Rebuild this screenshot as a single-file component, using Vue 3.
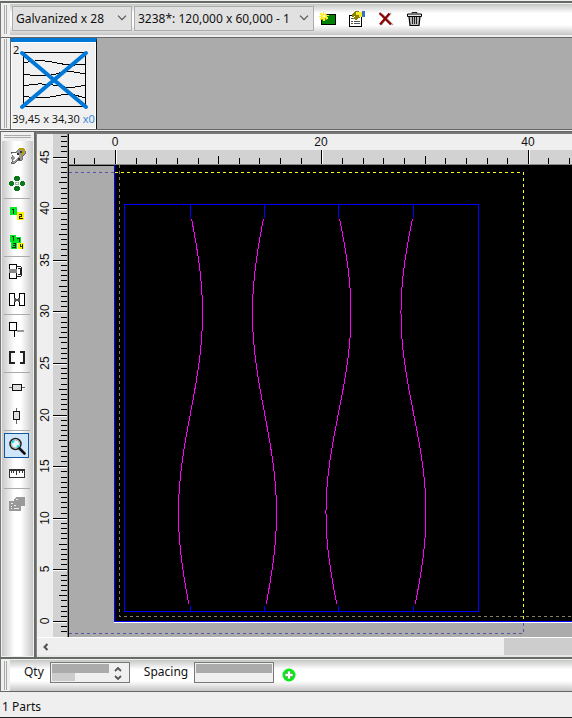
<script setup>
import { ref, computed, onMounted, onBeforeUnmount } from 'vue'

const material = ref('Galvanized x 28')
const sheet = ref('3238*: 120,000 x 60,000 - 1')
const qty = ref('')
const spacing = ref('')

// Pixels per drawing unit on screen
const UNIT = 10.32

const planEl = ref(null)
const planWidth = ref(500)
const measure = () => {
  if (planEl.value) planWidth.value = planEl.value.clientWidth
}
onMounted(() => {
  measure()
  window.addEventListener('resize', measure)
})
onBeforeUnmount(() => window.removeEventListener('resize', measure))

// Horizontal ruler: one tick per 2 units, labelled every 20
const hTicks = computed(() => {
  const list = []
  for (let n = -2; 46 + n * 2 * UNIT < planWidth.value; n++) {
    list.push({
      x: 46 + Math.round(n * 2 * UNIT),
      top: n % 10 === 0 ? 16 : n % 5 === 0 ? 22 : 24,
      major: n % 10 === 0,
      label: n * 2,
    })
  }
  return list
})

// Vertical ruler: one tick per half unit, labelled every 5
const vTicks = Array.from({ length: 97 }, (_, n) => n - 2).map((n) => ({
  y: 487 - Math.round((n * UNIT) / 2),
  left: n % 10 === 0 ? 16 : n % 5 === 0 ? 22 : 24,
  major: n % 10 === 0,
  label: n / 2,
}))

// Wavy cuts across the part
function wave(cx, amp) {
  const pts = []
  for (let y = 54; y <= 441; y += 5) {
    pts.push(`${(cx + amp * Math.sin(((y - 48) * Math.PI) / 200)).toFixed(2)},${y}`)
  }
  return pts.join(' ')
}
const cuts = [
  { x: 121, points: wave(121.5, 12) },
  { x: 195, points: wave(195.5, -12) },
  { x: 269, points: wave(269.5, 12.5) },
  { x: 344, points: wave(344.5, -12.5) },
]

const groups = [
  ['pick', 'move'],
  ['sort', 'sortall'],
  ['stack', 'gap'],
  ['corner', 'bracket'],
  ['centerh', 'centerv'],
  ['zoom', 'measure'],
  ['props'],
]
const names = {
  pick: 'Pick part', move: 'Move', sort: 'Order', sortall: 'Order all', stack: 'Stack', gap: 'Gap',
  corner: 'Corner', bracket: 'Bounds', centerh: 'Center horizontally', centerv: 'Center vertically',
  zoom: 'Zoom', measure: 'Measure', props: 'Properties',
}
</script>

<template>
  <div class="app">
    <header class="bar top">
      <span class="grip"></span>
      <div class="fill">
        <label class="pick material">
          <select v-model="material" aria-label="Material"><option>Galvanized x 28</option></select>
          <svg width="10" height="6" viewBox="0 0 10 6"><path d="M1 .7 5 4.7 9 .7" fill="none" stroke="#555" stroke-width="1.2" /></svg>
        </label>
        <label class="pick sheet">
          <select v-model="sheet" aria-label="Sheet"><option>3238*: 120,000 x 60,000 - 1</option></select>
          <svg width="10" height="6" viewBox="0 0 10 6"><path d="M1 .7 5 4.7 9 .7" fill="none" stroke="#555" stroke-width="1.2" /></svg>
        </label>
        <div class="tools">
          <button aria-label="New sheet">
            <svg width="18" height="16" shape-rendering="crispEdges">
              <path d="M2.500 3.500H16.500V13.500H2.500z" fill="#008000" stroke="#000" />
              <path d="M2 3h6v6H2z" fill="#9a9a20" />
              <path d="M4 1h1v2h1V2h1v2h3v1H8v1h1v2H7V7H6v3H4V8H2v1H1V7h1V6H0V5h2V4H1V2h2v1h1z" fill="#ffef20" />
              <path d="M4 4h2v2H4z" fill="#fff" />
            </svg>
          </button>
          <button aria-label="Sheet properties">
            <svg width="18" height="16" shape-rendering="crispEdges">
              <path d="M1.500 4.500h12v11h-12z" fill="#fff" stroke="#000" />
              <path d="M3 10.500h2M3 12.500h2M6 10.500h6M6 12.500h6M3 7.500h2" stroke="#555" />
              <path d="M4 3l3-3h4v2h3v4l-4 1-2 2-3-1 2-3-3 1z" fill="#8a8000" />
              <path d="M8 1h6l1 2v3h-4V4H8z" fill="#f5ec20" />
              <path d="M14 0h3v6h-3z" fill="#3970c8" />
            </svg>
          </button>
          <button aria-label="Remove">
            <svg width="18" height="16">
              <path d="M5 3l11 11M14 2 4 14" fill="none" stroke="#aaa" stroke-width="1.500" />
              <path d="M2.500 2 14 13.500M12.500 2.500 3 13.500" fill="none" stroke="#8c0000" stroke-width="2.200" />
            </svg>
          </button>
          <button aria-label="Clear">
            <svg width="18" height="16">
              <path d="M3 5.500h11l-1 9H4z" fill="#bbb" stroke="#000" stroke-width="1.200" />
              <path d="M1.500 3h14v2.500h-14z" fill="#e8e8e8" stroke="#000" />
              <path d="M6 2.500v-1h5v1M6.500 6v7M8.500 6v7M10.500 6v7" fill="none" stroke="#222" />
            </svg>
          </button>
        </div>
      </div>
    </header>

    <section class="strip">
      <span class="grip"></span>
      <div class="parts">
        <button class="part">
          <span class="num">2</span>
          <svg class="thumb" width="70" height="60" shape-rendering="crispEdges">
            <rect x="4.500" y="2.500" width="62" height="54" fill="none" stroke="#000" />
            <path d="M5 13C18 9 28 11 38 13S54 16 66 14M5 24C18 27 32 26 40 23S56 22 66 24M5 36C18 32 30 34 40 36S56 38 66 35M5 46C18 50 32 47 42 45S56 45 66 48" fill="none" stroke="#000" />
            <path d="M3 3 67 57M67 3 3 57" shape-rendering="auto" stroke="#0078d7" stroke-width="4" stroke-linecap="round" />
          </svg>
          <span class="dims">39,45 x 34,30 <em>x0</em></span>
        </button>
      </div>
    </section>

    <main class="work">
      <nav class="side">
        <span class="sgrip"></span>
        <div class="sfill">
          <div v-for="(g, i) in groups" :key="i" class="group">
            <button v-for="t in g" :key="t" :class="{ active: t === 'zoom' }" :aria-label="names[t]">
              <svg width="18" height="18" shape-rendering="crispEdges">
                <template v-if="t === 'pick'">
                  <path d="M3 5h5l3-3h4l2 2v3l-3 3v3l-2 1-2-1-3 3-2 1-2-1 2-3-2-2 2-2z" fill="#999" stroke="#444" stroke-width=".7" />
                  <path d="M4 6h4l3 3-5 5H5l2-3-2-2z" fill="#fff" />
                  <path d="M11 1.500h4l1 2-1 3-2 2" fill="none" stroke="#b8a000" stroke-width="2" />
                  <path d="M12 4h2v2h-2zM9 6h2v2H9zM10 11h2v2h-2z" fill="#333" />
                </template>
                <template v-else-if="t === 'move'">
                  <path d="M7 1h4v1h1v3h-1v1H7V5H6V2h1zM7 11h4v1h1v3h-1v1H7v-1H6v-3h1zM2 6h3v1h1v3H5v1H2v-1H1V7h1zM13 6h3v1h1v3h-1v1h-3v-1h-1V7h1z" fill="#087818" />
                  <path d="M7.500 7.500h3v2h-3z" fill="none" stroke="#9b9" />
                </template>
                <template v-else-if="t === 'sort'">
                  <path d="M2 2h7v8H2z" fill="#00ee20" /><path d="M9 7h7v8H9z" fill="#fff000" />
                  <path d="M4 4.500h1.500V9M11 9.500h2.500v2h-2V13.500h3" fill="none" stroke="#222" />
                </template>
                <template v-else-if="t === 'sortall'">
                  <path d="M2 2h6v7H2zM8 4h5v6H8zM3 9h6v7H3z" fill="#00e820" /><path d="M10 10h6v6h-6z" fill="#fff000" />
                  <path d="M4 3.500h1.500V8M9 5.500h2.500V9M5 10.500h2.500v2H5M7.500 12v2.500H4M12.500 11v2h2.500M14.500 11v5" fill="none" stroke="#123c18" />
                </template>
                <template v-else-if="t === 'stack'">
                  <path d="M1.500 1.500h7v6h-7zM1.500 9.500h7v6h-7z" fill="#fff" stroke="#000" />
                  <path d="M1 6h8v4H1z" fill="#888" />
                  <path d="M8 3.500h5M8 13.500h5M13.500 4v9M9.500 5.500h3v6h-3" fill="none" stroke="#222" />
                </template>
                <template v-else-if="t === 'gap'">
                  <path d="M1.500 2.500h5v12h-5zM11.500 2.500h5v12h-5z" fill="#fff" stroke="#000" />
                  <path d="M6 7h2v1h2V7h2v4h-2v-1H8v1H6z" fill="#555" />
                </template>
                <template v-else-if="t === 'corner'">
                  <path d="M9 10h7" stroke="#999" stroke-width="2" />
                  <path d="M1.500 1.500h7v8h-7zM6.500 10v6" fill="#fff" stroke="#000" />
                </template>
                <template v-else-if="t === 'bracket'">
                  <path d="M7 3H2v2M2 3v11h5M12 3h4v11h-4" fill="none" stroke="#222" stroke-width="1.500" />
                </template>
                <template v-else-if="t === 'centerh'">
                  <path d="M1 8.500h16" stroke="#666" /><path d="M4.500 5.500h9v6h-9z" fill="#ddd" stroke="#111" />
                </template>
                <template v-else-if="t === 'centerv'">
                  <path d="M8.500 1v16" stroke="#666" /><path d="M5.500 4.500h6v8h-6z" fill="#ddd" stroke="#111" />
                </template>
                <template v-else-if="t === 'zoom'">
                  <g shape-rendering="auto">
                    <circle cx="7.500" cy="7" r="5.500" fill="#e4fbfd" stroke="#222" stroke-width="1.500" />
                    <circle cx="7.500" cy="7" r="4" fill="none" stroke="#aaa" />
                    <path d="M4 5.500 6 4M9 10l2-1.500" stroke="#00dfe8" stroke-width="2" />
                    <path d="m11.500 11.500 5 5" stroke="#111" stroke-width="2.600" stroke-linecap="round" />
                  </g>
                </template>
                <template v-else-if="t === 'measure'">
                  <path d="M1.500 4.500h15v8h-15z" fill="#fff" stroke="#333" />
                  <path d="M1 4h16v2H1zM3 6h1v2H3zM5 6h1v2H5zM8 6h1v4H8zM11 6h1v2h-1zM14 6h1v2h-1z" fill="#333" />
                </template>
                <template v-else>
                  <path d="M1 6h5V4l2-2h9v9h-4v5H1z" fill="#999" />
                  <path d="M3 8.500h2M3 11.500h1M3 13.500h1M6 10.500h2M6 13.500h5M8 4.500h2" stroke="#eee" />
                </template>
              </svg>
            </button>
          </div>
        </div>
      </nav>

      <div class="view">
        <div class="stage">
          <svg class="vruler" shape-rendering="crispEdges">
            <rect x="16" width="14" height="100%" fill="#d2d2d2" />
            <template v-for="t in vTicks" :key="t.label">
              <rect :x="t.left" :y="t.y" :width="30 - t.left" height="1" fill="#000" />
              <rect v-if="t.major" x="16" :y="t.y + 1" width="14" height="1" fill="#fff" />
              <text v-if="t.major" :transform="`translate(12 ${t.y}) rotate(-90)`" text-anchor="middle">{{ t.label }}</text>
            </template>
            <rect x="30" width="1" height="100%" fill="#888" />
            <rect x="31" width="1" height="100%" fill="#000" />
          </svg>
          <div ref="planEl" class="plan">
            <svg class="hruler" shape-rendering="crispEdges">
              <rect y="16" width="100%" height="14" fill="#d2d2d2" />
              <template v-for="t in hTicks" :key="t.label">
                <rect :x="t.x" :y="t.top" width="1" :height="30 - t.top" fill="#000" />
                <rect v-if="t.major" :x="t.x + 1" y="16" width="1" height="14" fill="#fff" />
                <text v-if="t.major" :x="t.x" y="12" text-anchor="middle">{{ t.label }}</text>
              </template>
              <rect y="30" width="100%" height="1" fill="#888" />
            </svg>
            <svg class="canvas" shape-rendering="crispEdges">
              <rect x="45" width="100%" height="457" fill="#000" />
              <rect width="46" height="1" fill="#000" />
              <rect x="45" y="457" width="100%" height="1" fill="#fff" />
              <g fill="none" stroke-dasharray="3 3">
                <path d="M0 7.500H45M0 468.500H454.500V458" stroke="#5555aa" />
                <path d="M46 7.500H454.500V456" stroke="#ffff20" />
                <path d="M50.500 0V451.500H4000" stroke="#80805a" />
              </g>
              <rect x="45" width="1" height="457" fill="#0000ff" />
              <rect x="45" y="456" width="100%" height="1" fill="#0000ff" />
              <rect x="55.500" y="39.500" width="354" height="407" fill="none" stroke="#0000ff" />
              <g v-for="c in cuts" :key="c.x">
                <path :d="`M${c.x + 0.5} 40v13M${c.x + 0.5} 441v5`" stroke="#0000ff" />
                <polyline :points="c.points" fill="none" stroke="#ff00ff" />
              </g>
            </svg>
          </div>
        </div>
        <div class="scroll">
          <button aria-label="Scroll left">
            <svg width="8" height="8"><path d="M5.500 1 2.500 4l3 3" fill="none" stroke="#505050" stroke-width="2" /></svg>
          </button>
          <span class="thumbbar"></span>
        </div>
      </div>
    </main>

    <form class="bar bottom" @submit.prevent>
      <span class="grip"></span>
      <div class="fill">
        <label for="qty">Qty</label>
        <div class="spin">
          <input id="qty" v-model="qty" type="text" class="field qty" />
          <div class="arrows">
            <button aria-label="Increase"><svg width="8" height="6"><path d="M1 5 4 2l3 3" fill="none" stroke="#555" stroke-width="1.800" /></svg></button>
            <button aria-label="Decrease"><svg width="8" height="6"><path d="M1 1l3 3 3-3" fill="none" stroke="#555" stroke-width="1.800" /></svg></button>
          </div>
        </div>
        <label for="spacing" class="sp">Spacing</label>
        <div class="spin"><input id="spacing" v-model="spacing" type="text" class="field" /></div>
        <button class="add" aria-label="Add">
          <svg width="14" height="14"><circle cx="7" cy="7" r="6.500" fill="#00ee10" /><path d="M7 3v8M3 7h8" stroke="#999" stroke-width="3.500" /><path d="M7 3.500v7M3.500 7h7" stroke="#fff" stroke-width="2" /></svg>
        </button>
      </div>
    </form>
    <footer class="status">1 Parts</footer>
  </div>
</template>

<style>
body {
  margin: 0;
  background: #efefef;
}
</style>

<style scoped>
.app {
  display: flex;
  flex-direction: column;
  min-height: 100vh;
  box-sizing: border-box;
  border-bottom: 1px solid #222;
  background: #efefef;
  color: #111;
  font: 12px/16px "Noto Sans", "Open Sans", sans-serif;
  overflow: hidden;
}
button {
  display: flex;
  align-items: center;
  justify-content: center;
  padding: 0;
  border: 0;
  background: none;
  font: inherit;
  color: inherit;
}
svg {
  display: block;
}
.bar {
  display: flex;
  border-left: 1px solid #777;
}
.top {
  margin-top: 1px;
  border-top: 2px solid #666b66;
  padding: 1px 0 2px;
}
.grip {
  flex: none;
  width: 1px;
  margin: 1px 3px 1px 3px;
  border: solid #aaa;
  border-width: 0 1px;
}
.fill {
  flex: 1;
  display: flex;
  align-items: center;
  box-sizing: border-box;
  height: 31px;
  background: linear-gradient(#c6c6c6, #fff 30%, #fff 68%, #c6c6c6);
}
.top .fill {
  padding: 0 0 2px 2px;
}
.pick {
  position: relative;
  height: 25px;
  margin-right: 2px;
}
.material {
  width: 120px;
}
.pick.sheet {
  width: 180px;
}
.pick select {
  appearance: none;
  box-sizing: border-box;
  width: 100%;
  height: 100%;
  padding: 0 20px 0 3px;
  border: 1px solid #adadad;
  border-radius: 0;
  background: #e1e1e1;
  color: #111;
  font: inherit;
}
.pick svg {
  position: absolute;
  right: 5px;
  top: 9px;
}
.tools {
  display: flex;
  gap: 11px;
  margin-left: 3px;
}
.strip {
  display: flex;
  border-top: 1px solid #666;
  border-left: 1px solid #777;
  border-bottom: 1px solid #666;
}
.parts {
  flex: 1;
  display: flex;
  height: 91px;
  border-left: 1px solid #666;
  background: #ababab;
}
.part {
  flex-direction: column;
  position: relative;
  justify-content: flex-start;
  box-sizing: border-box;
  width: 86px;
  border-top: 4px solid #0078d7;
  border-right: 1px solid #111;
  background: #f0f0f0;
  box-shadow: inset -1px -1px #fff, inset 1px 1px #fff;
}
.num {
  position: absolute;
  left: 2px;
  top: 0;
  font-size: 11px;
}
.thumb {
  margin-top: 8px;
}
.dims {
  font: 11px/18px "Open Sans", "Noto Sans", sans-serif;
  white-space: nowrap;
}
.dims em {
  font-style: normal;
  color: #2a86d6;
}
.work {
  flex: 1;
  display: flex;
  margin-top: 1px;
  border-top: 1px solid #666;
}
.side {
  flex: none;
  display: flex;
  flex-direction: column;
  box-sizing: border-box;
  width: 36px;
  padding: 2px 1px 1px;
  border-left: 1px solid #777;
  border-right: 2px solid #666b66;
}
.sgrip {
  height: 1px;
  margin: 1px 2px 3px;
  border: solid #aaa;
  border-width: 1px 0;
}
.sfill {
  flex: 1;
  padding-top: 1px;
  background: linear-gradient(90deg, #c8c8c8, #fff 40%, #fff 60%, #c8c8c8);
}
.group + .group {
  border-top: 1px solid #aaa;
  padding-top: 1px;
}
.group {
  margin: 0 3px 0 2px;
}
.group button {
  width: 25px;
  height: 28px;
}
.group .active {
  box-sizing: border-box;
  height: 25px;
  margin: 1px 0 2px;
  border: 1px solid #0f58a0;
  background: #cfe6fa;
}
.view {
  flex: 1;
  min-width: 0;
  display: flex;
  flex-direction: column;
  border-top: 2px solid #777;
  border-left: 1px solid #888;
}
.stage {
  flex: 1;
  display: flex;
  border-bottom: 1px solid #fff;
}
.stage text {
  font: 12px "Liberation Sans", Arial, sans-serif;
  fill: #111;
}
.vruler {
  flex: none;
  width: 32px;
  height: auto;
}
.plan {
  flex: 1;
  min-width: 0;
  display: flex;
  flex-direction: column;
}
.hruler {
  width: 100%;
  height: 31px;
}
.canvas {
  flex: 1;
  width: 100%;
  background: #ababab;
}
.scroll {
  display: flex;
  justify-content: space-between;
  height: 17px;
  border-bottom: 2px solid #e6e6e6;
}
.scroll button {
  width: 17px;
}
.thumbbar {
  width: 68px;
  background: #cdcdcd;
}
.bottom {
  border-top: 2px solid #666b66;
  border-bottom: 1px solid #666;
  padding-top: 1px;
}
.bottom .fill {
  padding: 0 0 2px 14px;
}
.spin {
  display: flex;
  box-sizing: border-box;
  width: 80px;
  height: 21px;
  margin-left: 6px;
  margin-bottom: 5px;
  padding: 1px;
  border: 1px solid #777;
  background: #f0f0f0;
}
.bottom label {
  margin-bottom: 5px;
}
.sp {
  margin-left: 14px;
}
.field {
  flex: 1;
  min-width: 0;
  padding: 0;
  border: 0;
  outline: 0;
  font: inherit;
  background: linear-gradient(#ababab 50%, #f0f0f0 50%);
}
.qty {
  background: linear-gradient(#ababab, #ababab) 0 0 / 100% 9px no-repeat,
    linear-gradient(#ccc, #ccc) 0 9px / 23px 8px no-repeat, #f0f0f0;
}
.arrows {
  display: flex;
  flex-direction: column;
  justify-content: flex-end;
  gap: 3px;
  width: 19px;
}
.add {
  margin-left: 8px;
}
.status {
  height: 25px;
  padding-left: 2px;
  line-height: 29px;
}
</style>
